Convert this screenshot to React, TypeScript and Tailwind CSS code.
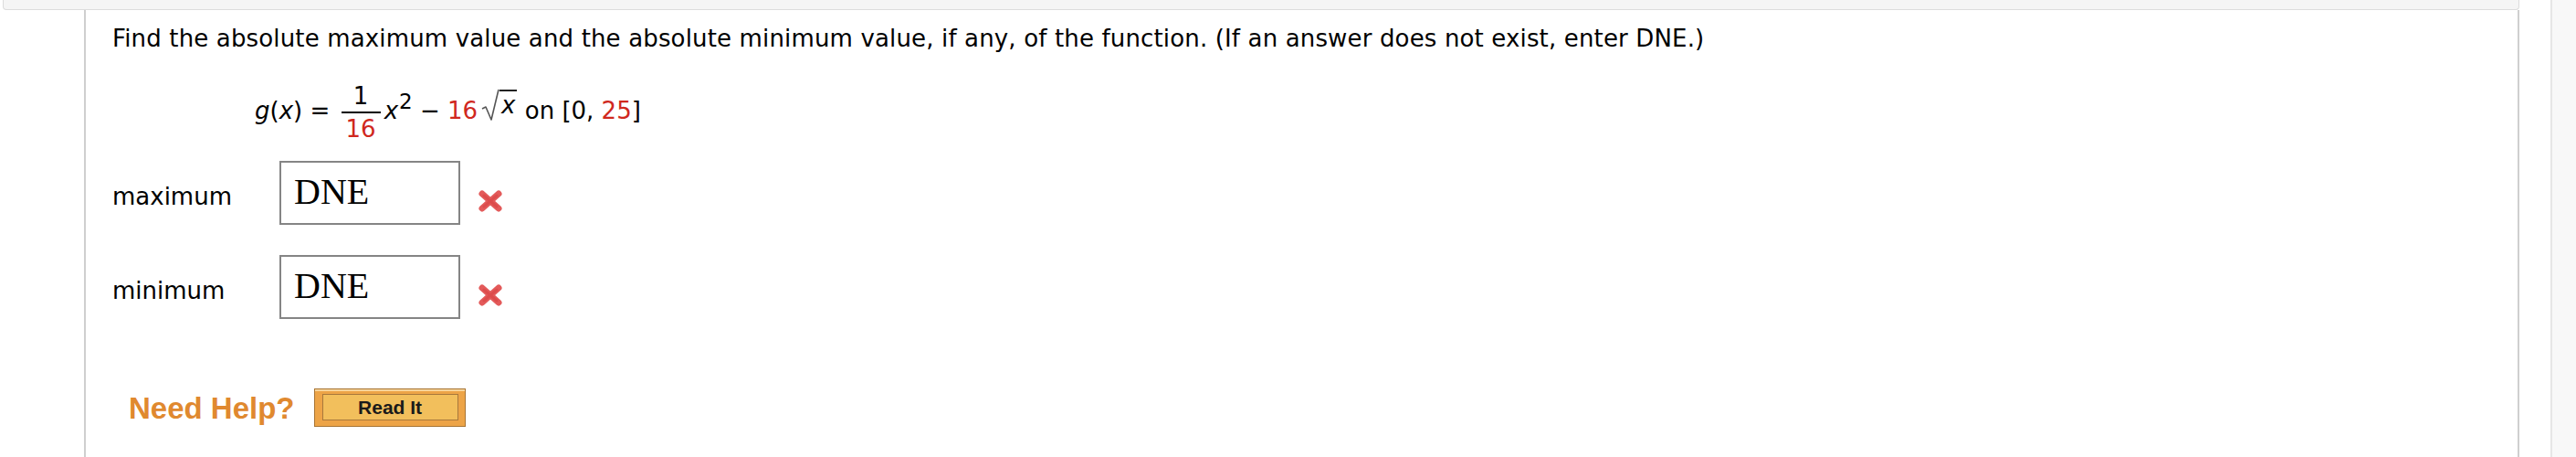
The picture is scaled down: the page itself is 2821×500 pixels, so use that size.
import React from 'react'

const sans = { fontFamily: '"DejaVu Sans", Verdana, sans-serif' }

function Fraction() {
  return (
    <span className="inline-flex flex-col items-stretch mx-[4px]">
      <span className="text-center leading-[26px] h-[26px]">1</span>
      <span className="mt-[4px] mb-[4px] h-[2px] bg-black" />
      <span className="text-center leading-[26px] h-[26px] px-[5px] text-[#d0281e]">16</span>
    </span>
  )
}

function Sqrt() {
  return (
    <span className="inline-flex items-start ml-[4px]">
      <svg width="20" height="36" viewBox="0 0 20 36" className="mt-[-1px]">
        <path d="M1 22 L5 20 L11 34 L19 1" fill="none" stroke="#555" strokeWidth="1.6" strokeLinejoin="round" />
      </svg>
      <span className="border-t-2 border-[#222] pl-[2px] pr-[2px] leading-[30px] italic">x</span>
    </span>
  )
}

function WrongMark() {
  return (
    <svg width="28" height="26" viewBox="0 0 28 26" className="mt-[31px] ml-[19px]">
      <g stroke="#e35a5a" strokeWidth="7" strokeLinecap="round">
        <line x1="5" y1="5" x2="23" y2="21" />
        <line x1="23" y1="5" x2="5" y2="21" />
      </g>
      <g stroke="#d94444" strokeWidth="3" strokeLinecap="round" opacity="0.6">
        <line x1="7" y1="7" x2="21" y2="19" />
        <line x1="21" y1="7" x2="7" y2="19" />
      </g>
    </svg>
  )
}

function AnswerRow({ label, value }: { label: string; value: string }) {
  return (
    <div className="flex items-start h-[70px]">
      <span className="w-[183px] mt-[24px] leading-[30px] text-black">{label}</span>
      <div className="w-[198px] h-[70px] border-2 border-[#858585] bg-white pl-[14px] pt-[10px]">
        <span
          className="text-[40px] leading-[44px] text-black"
          style={{ fontFamily: '"Liberation Serif", "Times New Roman", serif' }}
        >
          {value}
        </span>
      </div>
      <WrongMark />
    </div>
  )
}

export default function App() {
  return (
    <div className="flex h-[500px] w-[2821px] bg-white overflow-hidden text-[26px] text-black" style={sans}>
      <div className="w-[2759px] flex flex-col">
        <div className="ml-[3px] h-[11px] bg-[#f5f5f5] border border-t-0 border-[#dcdcdc] rounded-b-[4px]" />
        <div className="ml-[92px] flex-1 border-l-2 border-r-2 border-[#cfcfcf] pl-[29px] pt-[16px]">
          <p className="leading-[30px] tracking-[0.15px]">
            Find the absolute maximum value and the absolute minimum value, if any, of the function. (If an answer does not exist, enter DNE.)
          </p>

          <div className="mt-[35px] ml-[156px] flex items-center h-[62px] whitespace-pre">
            <span className="pb-[4px] leading-[26px]">
              <i>g</i>(<i>x</i>) ={' '}
            </span>
            <Fraction />
            <span className="pb-[4px] leading-[26px]">
              <i>x</i>
              <span className="inline-block text-[23px] relative top-[-11px] ml-[1px]">2</span> −{' '}
              <span className="text-[#d0281e]">16</span>
            </span>
            <span className="pb-[4px]">
              <Sqrt />
            </span>
            <span className="pb-[4px] leading-[26px]">
              {' '}on [0, <span className="text-[#d0281e]">25</span>]
            </span>
          </div>

          <div className="mt-[22px] flex flex-col gap-[33px]">
            <AnswerRow label="maximum" value="DNE" />
            <AnswerRow label="minimum" value="DNE" />
          </div>

          <div className="mt-[76px] ml-[18px] flex items-center h-[42px]">
            <span
              className="text-[33px] font-bold leading-[37px] text-[#e0892f]"
              style={{ fontFamily: '"Liberation Sans", Arial, sans-serif' }}
            >
              Need Help?
            </span>
            <button
              className="ml-[21px] border border-[#a87434] bg-[#eda447] pl-[8px] pr-[7px] pt-[5px] pb-[6px] shadow-[inset_0_2px_0_#f7d49a]"
              style={{ fontFamily: '"Liberation Sans", Arial, sans-serif' }}
            >
              <div className="w-[149px] h-[29px] border border-[#a8783c] bg-[#f2bf5c] flex items-center justify-center text-[21px] font-bold text-[#1a1a1a] leading-none">
                Read It
              </div>
            </button>
          </div>
        </div>
      </div>
      <div className="w-[34px]" />
      <div className="flex-1 bg-[#f8f8f8] border-l-2 border-[#e6e6e6]" />
    </div>
  )
}
